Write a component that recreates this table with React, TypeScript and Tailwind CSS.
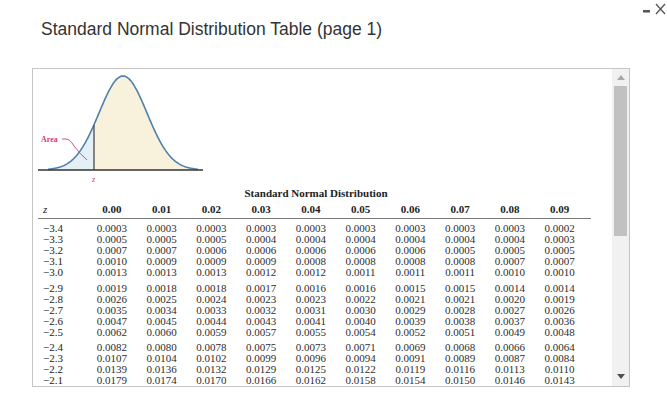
import React from 'react'

// ── data ──────────────────────────────────────────────────────────────────────

const COLS = ['0.00', '0.01', '0.02', '0.03', '0.04', '0.05', '0.06', '0.07', '0.08', '0.09']

const GROUPS: Array<Array<[string, string[]]>> = [
  [
    ['−3.4', ['0.0003', '0.0003', '0.0003', '0.0003', '0.0003', '0.0003', '0.0003', '0.0003', '0.0003', '0.0002']],
    ['−3.3', ['0.0005', '0.0005', '0.0005', '0.0004', '0.0004', '0.0004', '0.0004', '0.0004', '0.0004', '0.0003']],
    ['−3.2', ['0.0007', '0.0007', '0.0006', '0.0006', '0.0006', '0.0006', '0.0006', '0.0005', '0.0005', '0.0005']],
    ['−3.1', ['0.0010', '0.0009', '0.0009', '0.0009', '0.0008', '0.0008', '0.0008', '0.0008', '0.0007', '0.0007']],
    ['−3.0', ['0.0013', '0.0013', '0.0013', '0.0012', '0.0012', '0.0011', '0.0011', '0.0011', '0.0010', '0.0010']],
  ],
  [
    ['−2.9', ['0.0019', '0.0018', '0.0018', '0.0017', '0.0016', '0.0016', '0.0015', '0.0015', '0.0014', '0.0014']],
    ['−2.8', ['0.0026', '0.0025', '0.0024', '0.0023', '0.0023', '0.0022', '0.0021', '0.0021', '0.0020', '0.0019']],
    ['−2.7', ['0.0035', '0.0034', '0.0033', '0.0032', '0.0031', '0.0030', '0.0029', '0.0028', '0.0027', '0.0026']],
    ['−2.6', ['0.0047', '0.0045', '0.0044', '0.0043', '0.0041', '0.0040', '0.0039', '0.0038', '0.0037', '0.0036']],
    ['−2.5', ['0.0062', '0.0060', '0.0059', '0.0057', '0.0055', '0.0054', '0.0052', '0.0051', '0.0049', '0.0048']],
  ],
  [
    ['−2.4', ['0.0082', '0.0080', '0.0078', '0.0075', '0.0073', '0.0071', '0.0069', '0.0068', '0.0066', '0.0064']],
    ['−2.3', ['0.0107', '0.0104', '0.0102', '0.0099', '0.0096', '0.0094', '0.0091', '0.0089', '0.0087', '0.0084']],
    ['−2.2', ['0.0139', '0.0136', '0.0132', '0.0129', '0.0125', '0.0122', '0.0119', '0.0116', '0.0113', '0.0110']],
    ['−2.1', ['0.0179', '0.0174', '0.0170', '0.0166', '0.0162', '0.0158', '0.0154', '0.0150', '0.0146', '0.0143']],
  ],
]

// ── bell curve (page coordinates) ─────────────────────────────────────────────

const MU = 123
const SIGMA = 24
const BASE = 170
const PEAK = 94
const Z = 94

const yAt = (x: number) => BASE - PEAK * Math.exp(-(((x - MU) / SIGMA) ** 2) / 2)

function pts(from: number, to: number) {
  const out: string[] = []
  for (let x = from; x <= to; x += 1) out.push(`${x},${yAt(x).toFixed(2)}`)
  return out
}

function BellCurve() {
  const curve = 'M' + pts(48, 198).join(' L')
  const left = `M48,${BASE} L` + pts(48, Z).join(' L') + ` L${Z},${BASE} Z`
  const right = `M${Z},${BASE} L` + pts(Z, 198).join(' L') + ` L198,${BASE} Z`
  return (
    <svg width="180" height="118" viewBox="33 69 180 118" className="block shrink-0">
      <path d={left} fill="#e4f0f6" />
      <path d={right} fill="#f8f2dc" />
      <path d={curve} fill="none" stroke="#4f7fae" strokeWidth="1.6" />
      <line x1={Z} y1={yAt(Z)} x2={Z} y2={BASE} stroke="#555" strokeWidth="1.4" />
      <line x1="38" y1={BASE} x2="203" y2={BASE} stroke="#333" strokeWidth="1.4" />
      <path d="M62,139 L66,139 Q70,139 74,146 Q80,154 87,160" fill="none" stroke="#d63a7c" strokeWidth="0.9" />
      <text x="41" y="142" fontSize="8" fontWeight="bold" fill="#d63a7c" fontFamily="'Liberation Serif', serif">
        Area
      </text>
      <text x="92" y="182" fontSize="8" fontStyle="italic" fill="#d63a7c" fontFamily="'Liberation Serif', serif">
        z
      </text>
    </svg>
  )
}

// ── table ─────────────────────────────────────────────────────────────────────

function ZTable() {
  return (
    <div className="font-['Liberation_Serif',serif] text-[#2e2e2e]">
      <div className="w-[566px] h-[12px] leading-[12px] text-center text-[11px] font-bold text-[#222]">
        Standard Normal Distribution
      </div>
      <div className="flex h-[12px] mt-[4px] items-center leading-[12px] text-[11px] text-[#222]">
        <div className="w-[54px] pl-[10px] italic">z</div>
        {COLS.map((c) => (
          <div key={c} className="w-[49.75px] text-center font-bold">
            {c}
          </div>
        ))}
      </div>
      <div className="ml-[5px] mt-[3px] w-[553px] h-px bg-[#7a7a7a]" />
      <div className="mt-[4px] flex flex-col gap-[4.5px]">
        {GROUPS.map((g, gi) => (
          <div key={gi} className="flex flex-col">
            {g.map(([z, vals]) => (
              <div key={z} className="flex h-[11px] items-center leading-[11px] text-[11px]">
                <div className="w-[54px] pl-[10px] text-[#222]">{z}</div>
                {vals.map((v, i) => (
                  <div key={i} className="w-[49.75px] text-center">
                    {v}
                  </div>
                ))}
              </div>
            ))}
          </div>
        ))}
      </div>
    </div>
  )
}

// ── App ───────────────────────────────────────────────────────────────────────

export default function App() {
  return (
    <div className="relative w-[667px] h-[410px] bg-white overflow-hidden">
      {/* window controls */}
      <div className="absolute right-[1px] top-[3px] flex items-center gap-[5px]">
        <svg width="7" height="12" viewBox="0 0 7 12">
          <rect x="0" y="7" width="7" height="2.5" fill="#555" />
        </svg>
        <svg width="11" height="12" viewBox="0 0 11 12">
          <path d="M1,1 L10,11 M10,1 L1,11" stroke="#555" strokeWidth="1.3" fill="none" />
        </svg>
      </div>

      <h1 className="pl-[41px] pt-[18px] h-[68px] text-[17.5px] leading-[22px] text-[#333] font-['Liberation_Sans',Arial,sans-serif]">
        Standard Normal Distribution Table (page 1)
      </h1>

      <div className="ml-[32px] w-[598px] h-[319px] border border-[#c4c4c4] flex">
        <div className="flex-1 overflow-hidden bg-white">
          <BellCurve />
          <ZTable />
        </div>
        {/* scrollbar */}
        <div className="w-[17px] h-full bg-[#f1f1f1] flex flex-col items-center">
          <svg width="8" height="5" viewBox="0 0 8 5" className="mt-[6px]">
            <path d="M0,5 L4,0 L8,5 Z" fill="#a8a8a8" />
          </svg>
          <div className="mt-[6px] w-[13px] h-[150px] bg-[#c1c1c1]" />
          <div className="flex-1" />
          <svg width="8" height="5" viewBox="0 0 8 5" className="mb-[7px]">
            <path d="M0,0 L8,0 L4,5 Z" fill="#505050" />
          </svg>
        </div>
      </div>
    </div>
  )
}
